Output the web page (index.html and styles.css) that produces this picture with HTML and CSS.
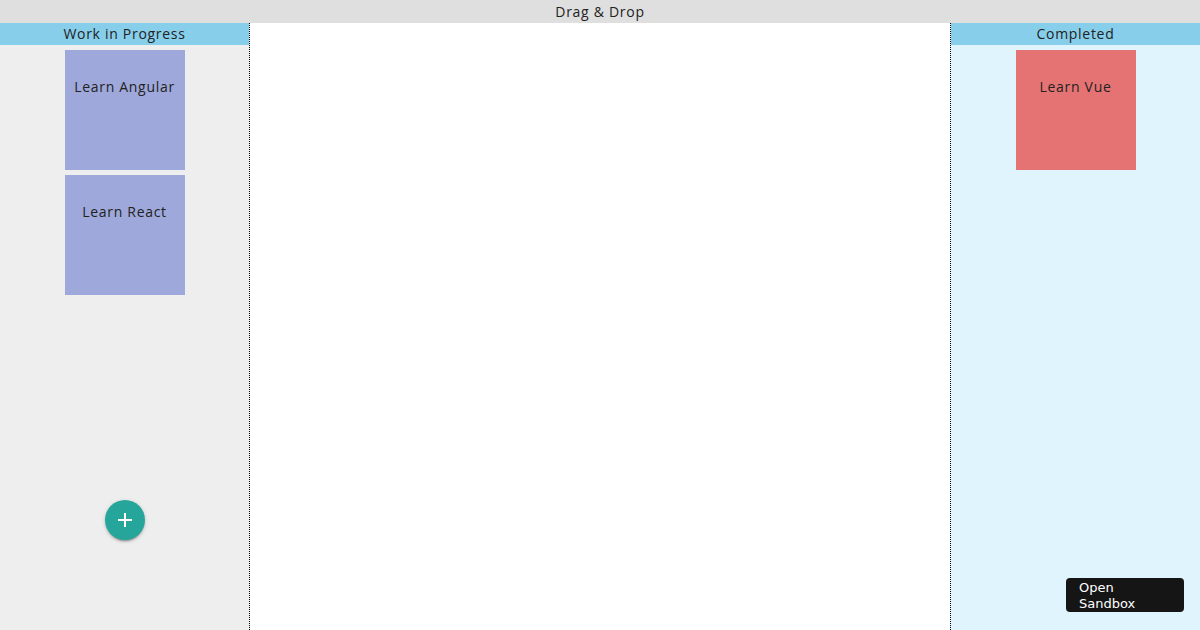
FILE: index.html
```html
<!DOCTYPE html>
<html>
<head>
<meta charset="utf-8">
<link rel="stylesheet" href="styles.css">
</head>
<body>
<div class="app">
  <header class="topbar">Drag &amp; Drop</header>
  <main class="board">
    <section class="column wip">
      <div class="col-title">Work in Progress</div>
      <div class="cards">
        <div class="card indigo">Learn Angular</div>
        <div class="card indigo">Learn React</div>
      </div>
      <button class="fab" aria-label="Add">
        <svg width="16" height="16" viewBox="0 0 16 16"><path d="M8 1v14M1 8h14" stroke="#fff" stroke-width="2" fill="none"/></svg>
      </button>
    </section>
    <section class="middle"></section>
    <section class="column done">
      <div class="col-title">Completed</div>
      <div class="cards">
        <div class="card red">Learn Vue</div>
      </div>
    </section>
  </main>
  <a class="sandbox">Open Sandbox</a>
</div>
</body>
</html>
```
FILE: styles.css
```css
html, body {
  margin: 0;
  padding: 0;
  height: 100%;
}
body {
  font-family: "Open Sans", "Liberation Sans", sans-serif;
  color: #222;
  overflow: hidden;
  letter-spacing: 0.7px;
}
.app {
  height: 630px;
  display: flex;
  flex-direction: column;
  position: relative;
}
.topbar {
  height: 23px;
  background: #dfdfdf;
  text-align: center;
  font-size: 14px;
  line-height: 23px;
  flex: none;
}
.board {
  flex: 1;
  display: grid;
  grid-template-columns: 250px 1fr 250px;
}
.column {
  position: relative;
  display: flex;
  flex-direction: column;
}
.wip {
  background: #eeeeee;
  border-right: 1px dotted #000;
}
.done {
  background: #e0f4fd;
  border-left: 1px dotted #000;
}
.middle {
  background: #fff;
}
.col-title {
  background: #87ceeb;
  height: 22px;
  line-height: 22px;
  text-align: center;
  font-size: 14px;
}
.cards {
  display: flex;
  flex-direction: column;
  align-items: center;
  gap: 5px;
  padding-top: 5px;
}
.card {
  width: 120px;
  height: 120px;
  box-sizing: border-box;
  padding-top: 27px;
  text-align: center;
  font-size: 14px;
  line-height: 20px;
}
.indigo { background: #9fa8da; }
.red { background: #e57373; }
.fab {
  position: absolute;
  left: 105px;
  top: 477px;
  width: 40px;
  height: 40px;
  border-radius: 50%;
  border: none;
  padding: 0;
  background: #26a69a;
  display: flex;
  align-items: center;
  justify-content: center;
  box-shadow: 0 2px 2px rgba(0,0,0,0.14), 0 1px 5px rgba(0,0,0,0.12), 0 3px 1px -2px rgba(0,0,0,0.2);
}
.sandbox {
  position: absolute;
  right: 16px;
  bottom: 18px;
  width: 118px;
  height: 34px;
  box-sizing: border-box;
  padding: 2px 13px 0;
  background: #151515;
  border-radius: 4px;
  color: #fff;
  font-family: "DejaVu Sans", sans-serif;
  font-size: 13px;
  line-height: 16px;
  letter-spacing: 0;
  word-spacing: 40px;
}
```
